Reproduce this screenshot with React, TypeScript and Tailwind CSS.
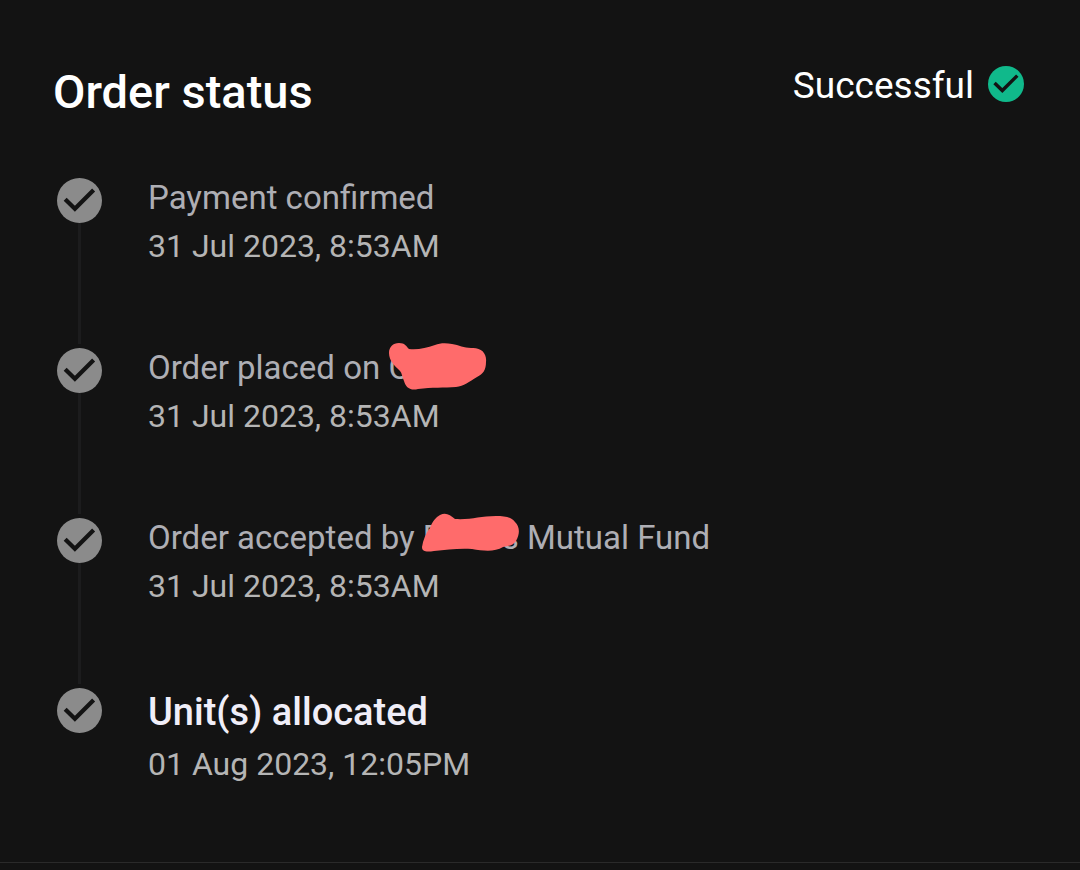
import { ReactNode } from 'react'

type Step = {
  title: ReactNode
  date: string
  current?: boolean
}

function CheckCircle({ className }: { className: string }) {
  return (
    <svg viewBox="0 0 44 44" className={className} aria-hidden="true">
      <circle cx="22" cy="22" r="22" fill="currentColor" />
      <path d="M8 20.8 17.5 30 35.8 11.8" fill="none" stroke="#131313" strokeWidth="4.2" />
    </svg>
  )
}

// Scribbles that hide the names in the step titles
function ExchangeName() {
  return (
    <span className="relative inline-flex w-[98px]">
      C
      <svg viewBox="0 0 100 48" className="absolute top-[-2px] left-0 h-12 w-[100px]" aria-hidden="true">
        <path
          d="M1 11C1 5 5 1 11 1c6 0 7 3 10 6 9 1 17-1 26-4 5-2 11-2 17-1 7 1 12 4 19 4 10-1 16 5 15 14 0 8-3 12-9 15-8 5-13 9-21 10-12 1-24 0-38 2-7 2-12-1-14-8-2-4-2-8-4-10-5-5-11-10-11-18z"
          fill="#ff6b6b"
        />
      </svg>
    </span>
  )
}

function FundName() {
  return (
    <span className="relative inline-flex w-24 justify-between">
      <span>P</span>
      <span>s</span>
      <svg viewBox="0 0 100 40" className="absolute top-[-1px] left-[-2px] h-10 w-[100px]" aria-hidden="true">
        <path
          d="M1 34C2 27 5 20 9 15c2-6 6-11 10-13 6-3 10 0 15 4 16 1 25-3 41-3 9 0 15 1 19 6 5 5 5 12 1 19-3 5-8 5-13 6-8 5-19 4-31 2-14-1-25 1-38 2-7 1-12 1-12-4z"
          fill="#ff6b6b"
        />
      </svg>
    </span>
  )
}

const steps: Step[] = [
  { title: 'Payment confirmed', date: '31 Jul 2023, 8:53AM' },
  { title: <>Order placed on <ExchangeName /></>, date: '31 Jul 2023, 8:53AM' },
  { title: <>Order accepted by <FundName /> Mutual Fund</>, date: '31 Jul 2023, 8:53AM' },
  { title: 'Unit(s) allocated', date: '01 Aug 2023, 12:05PM', current: true },
]

export default function App() {
  return (
    <main className="min-h-screen bg-[#131313] font-['Roboto',sans-serif] text-white">
      <section className="border-b border-[#2a2a2a] pt-14 pr-14 pb-[74px] pl-[53px]">
        <header className="flex items-start justify-between">
          <h1 className="text-[47px] leading-[72px] font-medium">Order status</h1>
          <div className="flex items-start gap-[14px]">
            <span className="text-[37px] leading-[60px]">Successful</span>
            <CheckCircle className="mt-[10px] size-9 text-[#10b98b]" />
          </div>
        </header>

        <ol className="mt-[46px]">
          {steps.map((step, i) => (
            <li key={i} className="flex gap-[46px] pl-1">
              <div className="flex flex-col items-center pt-1">
                <CheckCircle className="size-[45px] text-[#8b8b8b]" />
                {i < steps.length - 1 && <div className="w-[3px] flex-1 bg-[#1c1c1d]" />}
              </div>
              <div className={step.current ? '' : 'pb-[74px]'}>
                <h2
                  className={
                    step.current
                      ? 'text-[38px] leading-[56px] font-medium text-[#f0eef8]'
                      : 'text-[33px] leading-[48px] text-[#aeaeb4]'
                  }
                >
                  {step.title}
                </h2>
                <p className="text-[32px] leading-[48px] text-[#b5b5b5]">{step.date}</p>
              </div>
            </li>
          ))}
        </ol>
      </section>
    </main>
  )
}
